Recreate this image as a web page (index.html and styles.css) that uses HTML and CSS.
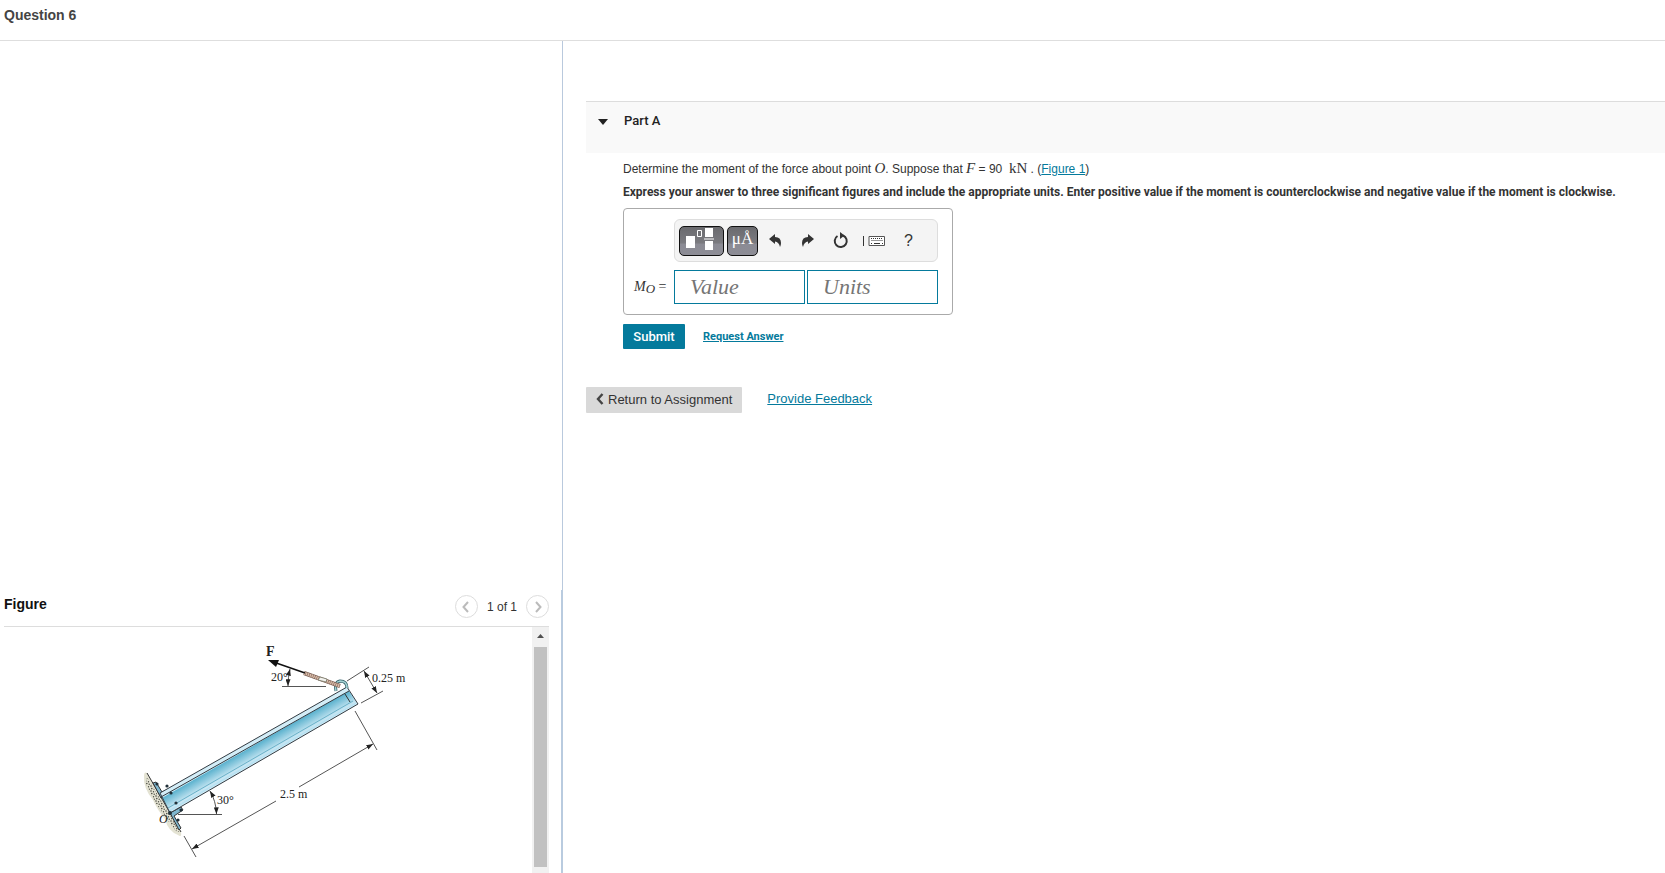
FILE: index.html
```html
<!DOCTYPE html>
<html lang="en">
<head>
<meta charset="utf-8">
<title>Question 6</title>
<link rel="stylesheet" href="styles.css">
</head>
<body>
<header class="page-header"><h1>Question 6</h1></header>
<main class="columns">
  <aside class="left">
    <div class="left-blank"></div>
    <section class="figure-panel">
      <div class="figure-head">
        <h2>Figure</h2>
        <nav class="pager" aria-label="Figures">
          <button class="round" aria-label="Previous figure"><svg width="10" height="12" viewBox="0 0 10 12"><path d="M7 1L2.500 6L7 11"/></svg></button>
          <span>1 of 1</span>
          <button class="round" aria-label="Next figure"><svg width="10" height="12" viewBox="0 0 10 12"><path d="M3 1L7.500 6L3 11"/></svg></button>
        </nav>
      </div>
      <div class="figure-body">
        <div class="figure-view">
          <svg class="beam" width="290" height="240" viewBox="123 627 290 240" role="img" aria-label="Inclined beam with force F">
            <defs>
              <linearGradient id="web" gradientUnits="userSpaceOnUse" x1="254" y1="742" x2="262" y2="756">
                <stop offset="0" stop-color="#4faac8"/><stop offset="0.200" stop-color="#5cb2ce"/><stop offset="1" stop-color="#cbe8f4"/>
              </linearGradient>
              <pattern id="grit" width="5" height="5" patternUnits="userSpaceOnUse">
                <g fill="#4a4a42"><circle cx="1" cy="1" r="0.800"/><circle cx="3.500" cy="1.800" r="0.700"/><circle cx="1.800" cy="3.600" r="0.800"/><circle cx="4.200" cy="4.200" r="0.700"/></g>
              </pattern>
              <marker id="tip" viewBox="0 0 8 6" refX="8" refY="3" markerWidth="7" markerHeight="5" markerUnits="userSpaceOnUse" orient="auto-start-reverse"><path d="M0 0L8 3L0 6z" fill="#222"/></marker>
            </defs>
            <path d="M147 773L181 832Q182 838 178 835Q168 831 165 819Q158 811 153 800Q143 788 144 776Q144 771 147 773z" fill="#e4e3d3"/>
            <path d="M147 777L180 832L176 831L166 818L155 802L146 784z" fill="url(#grit)"/>
            <path d="M147 773L181 832" class="ink"/>
            <path d="M153 783L156 782L162 792L173 787L174 790L161 798z" fill="#7fb7cf" class="ink"/>
            <path d="M170 813L181 807L183 810L174 816L181 828L179 830z" fill="#7fb7cf" class="ink"/>
            <path d="M160 793L347 687L358 704L170 813z" fill="#d3edf7"/>
            <path d="M162 798L349 691L356 702L169 810z" fill="url(#web)"/>
            <path d="M168 808L353 701" stroke="#6bb1c8" fill="none"/>
            <path d="M169 811L356 703" stroke="#b9e2f2" stroke-width="2" fill="none"/>
            <path d="M160 793L347 687L358 704L170 813M161 797L349 691M160 793L170 813" class="beam-line"/>
            <path d="M345 694L350 702" class="ink"/>
            <g fill="#22313a"><circle cx="157" cy="784" r="1.600"/><circle cx="167" cy="786" r="1.600"/><circle cx="171" cy="793" r="1.600"/><circle cx="176" cy="803" r="1.600"/><circle cx="181" cy="810" r="1.600"/><circle cx="178" cy="820" r="1.600"/><circle cx="170" cy="813" r="2"/></g>
            <path d="M336 691Q334 682 340 681Q347 681 347 688" fill="none" stroke="#315f68" stroke-width="3"/>
            <path d="M336 691Q334 682 340 681Q347 681 347 688" fill="none" stroke="#a3d2d3" stroke-width="1.500"/>
            <path d="M304 673L340 686" stroke="#73584d" stroke-width="4"/>
            <path d="M304 673L340 686" stroke="#d8bba9" stroke-width="3" stroke-dasharray="1.500 0.500"/>
            <path d="M320 677L327 679L326 682L318 680z" fill="#f1f1ee" stroke="#776" stroke-width="0.800"/>
            <path d="M272 661.500L305 673" stroke="#111" stroke-width="1.600"/>
            <path d="M268 660L279 660L276 667z" fill="#111"/>
            <g class="dim">
              <path d="M282 686.500H326M178 814.500H222M347 681L369 667M361 703L383 691M355 711L377 750M184 836L196 857"/>
              <path d="M364 671L377 693" marker-start="url(#tip)" marker-end="url(#tip)"/>
              <path d="M290 669Q288 677 288 686" marker-start="url(#tip)" marker-end="url(#tip)"/>
              <path d="M210 791Q216 801 216.500 814" marker-start="url(#tip)" marker-end="url(#tip)"/>
              <path d="M276 801L192 849" marker-end="url(#tip)"/>
              <path d="M299 787L373 744" marker-end="url(#tip)"/>
            </g>
            <g class="label">
              <text x="266" y="656" class="force">F</text><text x="271" y="681">20°</text><text x="372" y="682">0.25 m</text>
              <text x="217" y="804">30°</text><text x="280" y="798">2.5 m</text><text x="159" y="823" class="origin">O</text>
            </g>
          </svg>
        </div>
        <div class="scrollbar"><svg width="17" height="20" viewBox="0 0 17 20"><path d="M5 11L8.500 7L12 11z" fill="#505050"/></svg><div class="thumb"></div></div>
      </div>
    </section>
  </aside>
  <section class="right">
    <div class="part-head"><svg width="10" height="6" viewBox="0 0 10 6"><path d="M0 0H10L5 6z" fill="#222"/></svg><h2>Part A</h2></div>
    <div class="part-body">
      <p class="prompt">Determine the moment of the force about point <i class="math">O</i>. Suppose that <i class="math">F</i> = 90 &nbsp;<span class="math">kN</span> . (<a href="#">Figure 1</a>)</p>
      <p class="instruction">Express your answer to three significant figures and include the appropriate units. Enter positive value if the moment is counterclockwise and negative value if the moment is clockwise.</p>
      <form class="answer">
        <div class="toolbar">
          <button type="button" class="dark templates" aria-label="Templates"><svg width="43" height="28" viewBox="0 0 43 28"><path d="M6 9h9v12H6zM25 1h8v9h-8zM25 14h8v9h-8zM24 11.500h10v1H24z" fill="#fff"/><path d="M17.500 3.500h4v6h-4z" fill="none" stroke="#fff"/></svg></button>
          <button type="button" class="dark symbols">μÅ</button>
          <button type="button" class="tool" aria-label="Undo"><svg width="16" height="16" viewBox="0 0 16 16"><path d="M2 6L8 1V4Q14 4 14 10Q14 12 13 14Q12 9 8 8.500V11z" fill="#333"/></svg></button>
          <button type="button" class="tool" aria-label="Redo"><svg width="16" height="16" viewBox="0 0 16 16"><path d="M14 6L8 1V4Q2 4 2 10Q2 12 3 14Q4 9 8 8.500V11z" fill="#333"/></svg></button>
          <button type="button" class="tool" aria-label="Reset"><svg width="16" height="17" viewBox="0 0 16 17"><path d="M10 3.500A6 6 0 1 1 4.500 4" fill="none" stroke="#333" stroke-width="2"/><path d="M7 0L11.500 3.500L7 7z" fill="#333"/></svg></button>
          <button type="button" class="tool keys" aria-label="Keyboard"><svg width="24" height="14" viewBox="0 0 24 14"><path d="M1.500 2V12" stroke="#333"/><path d="M7 2.500H22.500V11.500H7z" fill="#fff" stroke="#555"/><path d="M9 4.500H21M9.500 6.500H21" stroke="#333" stroke-dasharray="1 1"/><path d="M9 9.500H10M12 9.500H18M20 9.500H21" stroke="#333"/></svg></button>
          <button type="button" class="tool help">?</button>
        </div>
        <label class="var" for="value"><i>M<span class="sub">O</span></i> =</label>
        <div class="fields"><input id="value" placeholder="Value"><input aria-label="Units" placeholder="Units"></div>
      </form>
      <div class="actions"><button class="submit">Submit</button><a href="#">Request Answer</a></div>
    </div>
    <div class="bottom-actions">
      <button class="return"><svg width="8" height="12" viewBox="0 0 8 12"><path d="M6.500 1L2 6L6.500 11" fill="none" stroke="#444" stroke-width="2.400"/></svg>Return to Assignment</button>
      <a href="#">Provide Feedback</a>
    </div>
  </section>
</main>
</body>
</html>
```
FILE: styles.css
```css
* { box-sizing: border-box; }
body { margin: 0; min-height: 100vh; display: flex; flex-direction: column; background: #fff; color: #333; font: 12px/16px "Liberation Sans", Arial, sans-serif; }
h1, h2, p { margin: 0; }
button, input { font-family: inherit; margin: 0; }
button { border: 0; padding: 0; background: none; color: inherit; display: flex; align-items: center; justify-content: center; }
a { color: #047a9c; text-decoration: underline; }
.page-header { padding: 7px 4px 17px; border-bottom: 1px solid #dedede; }
.page-header h1 { font-size: 14px; line-height: 16px; color: #444; }
.columns { flex: 1; display: grid; grid-template-columns: 563px minmax(0, 1fr); }
.left { display: flex; flex-direction: column; }
.left-blank { flex: 1; border-right: 1px solid #b9c9dd; }
.figure-panel { border-right: 2px solid #b9cbdf; padding: 5px 12px 0 4px; }
.figure-head { display: flex; justify-content: space-between; align-items: flex-start; border-bottom: 1px solid #ddd; padding-bottom: 8px; }
.figure-head h2 { font-size: 14px; line-height: 18px; color: #111; }
.pager { display: flex; align-items: center; gap: 9px; }
.round { width: 23px; height: 23px; border: 1px solid #ddd; border-radius: 50%; }
.round path { fill: none; stroke: #bbb; stroke-width: 2; }
.figure-body { display: flex; height: 246px; overflow: hidden; }
.figure-view { flex: 1; display: flex; justify-content: center; }
.ink { stroke: #333; stroke-width: 1; }
.beam-line { fill: none; stroke: #333b42; stroke-width: 1; }
.dim { fill: none; stroke: #555; stroke-width: 1; }
.label { font: 12px "Liberation Serif", "Times New Roman", serif; fill: #222; }
.force { font-size: 14px; font-weight: bold; }
.origin { font-style: italic; }
.scrollbar { width: 17px; background: #f1f1f1; display: flex; flex-direction: column; padding-bottom: 6px; }
.thumb { flex: 1; margin: 0 2px; background: #c1c1c1; }
.right { padding: 60px 0 0 23px; }
.part-head { display: flex; align-items: flex-start; gap: 16px; padding: 11px 12px; min-height: 52px; border-top: 1px solid #ddd; background: #f9f9f9; }
.part-head svg { margin-top: 6px; }
.part-head h2 { font: 500 13px/16px Roboto, Arial, sans-serif; color: #222; }
.part-body { padding: 7px 0 0 37px; }
.prompt { line-height: 18px; }
.math { font-family: "Liberation Serif", "Times New Roman", serif; font-size: 15px; line-height: 16px; }
.instruction { font: bold 12px/16px Roboto, Arial, sans-serif; margin-top: 6px; }
.answer { display: grid; grid-template-columns: 40px 264px; gap: 8px 0; width: 330px; max-width: 100%; margin-top: 8px; padding: 10px; border: 1px solid #aaa; border-radius: 4px; align-items: center; }
.toolbar { grid-column: 2; display: flex; align-items: center; height: 43px; padding: 0 4px; border: 1px solid #ddd; border-radius: 6px; background: #f4f4f4; }
.dark { height: 30px; border: 1px solid #111; border-radius: 5px; color: #fff; background: linear-gradient(#6a6a6e, #7b7b80 58%, #8b8b94 60%, #8d8d96); }
.templates { width: 45px; margin-right: 3px; }
.symbols { width: 31px; font: 17px/20px "Liberation Serif", serif; padding-bottom: 3px; }
.tool { width: 33px; height: 30px; }
.tool.help { font-size: 16px; width: 37px; }
.var { font: 14px/20px "Liberation Serif", "Times New Roman", serif; white-space: nowrap; }
.sub { font-size: 13px; position: relative; top: 2px; }
.fields { display: grid; grid-template-columns: 1fr 1fr; gap: 2px; }
.fields input { min-width: 0; width: 100%; height: 34px; border: 1px solid #047a9c; border-radius: 0; padding: 0 15px; font: italic 22px/28px "Liberation Serif", "Times New Roman", serif; }
.fields input::placeholder { color: #757575; opacity: 1; }
.actions { display: flex; align-items: center; gap: 18px; margin-top: 9px; }
.actions a { font: bold 11px/16px Roboto, Arial, sans-serif; }
.submit { width: 62px; height: 25px; background: #047a9c; color: #fff; font: 500 13px/16px Roboto, Arial, sans-serif; border-radius: 1px; }
.bottom-actions { display: flex; align-items: center; gap: 25px; margin-top: 38px; font-size: 13px; }
.bottom-actions a { padding-bottom: 2px; }
.return { height: 26px; padding: 0 10px 2px; gap: 4px; background: #d9d9d9; font-size: 13px; border-radius: 1px; }
```
